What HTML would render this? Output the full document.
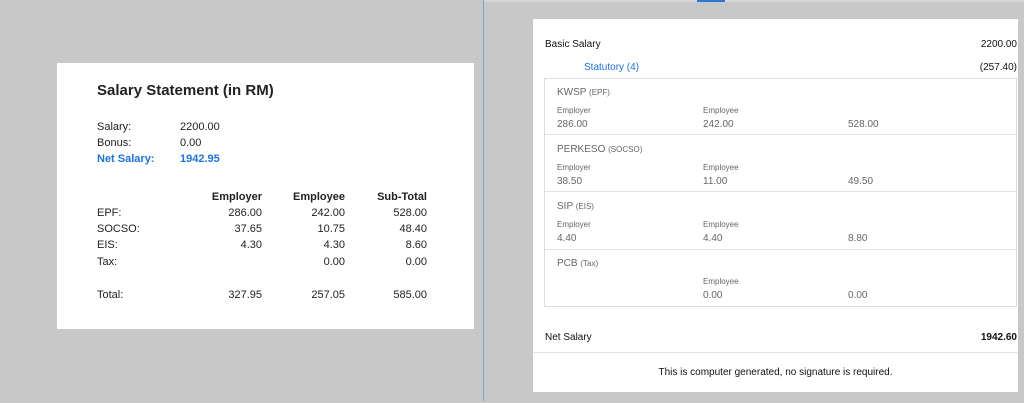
<!DOCTYPE html>
<html><head><meta charset="utf-8"><style>
*{margin:0;padding:0;box-sizing:border-box}
body{width:1024px;height:401px;background:#c8c8c8;font-family:"Liberation Sans",Arial,sans-serif;position:relative;overflow:hidden;color:#222}
.a{position:absolute;white-space:nowrap;line-height:1}
.l{font-size:11px;color:#222}
.r{text-align:right}
.g{color:#666}
.w{position:absolute;left:0;width:1024px;height:401px}
</style></head><body>
<div class="a" style="left:483px;top:0;width:1px;height:401px;background:#7aa6d6"></div>
<div class="a" style="left:484px;top:0;width:540px;height:2px;background:#d8d8d8"></div>
<div class="a" style="left:697px;top:0;width:28px;height:2px;background:#2a78d0"></div>

<div class="a" style="left:57px;top:63px;width:417px;height:266px;background:#fff"></div>
<div class="w" style="top:1px">
<div class="a" style="left:97px;top:82px;font-size:15px;font-weight:bold;color:#222">Salary Statement (in RM)</div>
<div class="a l" style="left:97px;top:121px">Salary:</div><div class="a l" style="left:180px;top:121px">2200.00</div>
<div class="a l" style="left:97px;top:137px">Bonus:</div><div class="a l" style="left:180px;top:137px">0.00</div>
<div class="a l" style="left:97px;top:153px;color:#1a73e8;font-weight:bold">Net Salary:</div><div class="a l" style="left:180px;top:153px;color:#1a73e8;font-weight:bold">1942.95</div>
<div class="a l r" style="left:162px;width:100px;top:191px;font-weight:bold">Employer</div>
<div class="a l r" style="left:245px;width:100px;top:191px;font-weight:bold">Employee</div>
<div class="a l r" style="left:327px;width:100px;top:191px;font-weight:bold">Sub-Total</div>
<div class="a l" style="left:97px;top:207px">EPF:</div><div class="a l r" style="left:162px;width:100px;top:207px">286.00</div><div class="a l r" style="left:245px;width:100px;top:207px">242.00</div><div class="a l r" style="left:327px;width:100px;top:207px">528.00</div>
<div class="a l" style="left:97px;top:223px">SOCSO:</div><div class="a l r" style="left:162px;width:100px;top:223px">37.65</div><div class="a l r" style="left:245px;width:100px;top:223px">10.75</div><div class="a l r" style="left:327px;width:100px;top:223px">48.40</div>
<div class="a l" style="left:97px;top:239px">EIS:</div><div class="a l r" style="left:162px;width:100px;top:239px">4.30</div><div class="a l r" style="left:245px;width:100px;top:239px">4.30</div><div class="a l r" style="left:327px;width:100px;top:239px">8.60</div>
<div class="a l" style="left:97px;top:256px">Tax:</div><div class="a l r" style="left:245px;width:100px;top:256px">0.00</div><div class="a l r" style="left:327px;width:100px;top:256px">0.00</div>
<div class="a l" style="left:97px;top:289px">Total:</div><div class="a l r" style="left:162px;width:100px;top:289px">327.95</div><div class="a l r" style="left:245px;width:100px;top:289px">257.05</div><div class="a l r" style="left:327px;width:100px;top:289px">585.00</div>
</div>

<div class="a" style="left:533px;top:19px;width:485px;height:373px;background:#fff"></div>
<div class="a" style="left:533px;top:352px;width:485px;height:1px;background:#e4e4e4"></div>
<div class="a" style="left:544px;top:78px;width:473px;height:229px;border:1px solid #ddd"></div>
<div class="a" style="left:545px;top:134px;width:471px;height:1px;background:#e2e2e2"></div>
<div class="a" style="left:545px;top:191px;width:471px;height:1px;background:#e2e2e2"></div>
<div class="a" style="left:545px;top:249px;width:471px;height:1px;background:#e2e2e2"></div>
<div class="w" style="top:2px">
<div class="a" style="left:545px;top:38px;font-size:10px;color:#111">Basic Salary</div>
<div class="a r" style="left:917px;width:100px;top:38px;font-size:10px;color:#111">2200.00</div>
<div class="a" style="left:584px;top:61px;font-size:10px;color:#1a73e8">Statutory (4)</div>
<div class="a r" style="left:917px;width:100px;top:61px;font-size:10px;color:#111">(257.40)</div>

<div class="a g" style="left:557px;top:86px;font-size:10px">KWSP <span style="font-size:8px">(EPF)</span></div>
<div class="a g" style="left:557px;top:105px;font-size:8px">Employer</div><div class="a g" style="left:703px;top:105px;font-size:8px">Employee</div>
<div class="a g" style="left:557px;top:118px;font-size:10px">286.00</div><div class="a g" style="left:703px;top:118px;font-size:10px">242.00</div><div class="a g" style="left:848px;top:118px;font-size:10px">528.00</div>

<div class="a g" style="left:557px;top:143px;font-size:10px">PERKESO <span style="font-size:8px">(SOCSO)</span></div>
<div class="a g" style="left:557px;top:162px;font-size:8px">Employer</div><div class="a g" style="left:703px;top:162px;font-size:8px">Employee</div>
<div class="a g" style="left:557px;top:175px;font-size:10px">38.50</div><div class="a g" style="left:703px;top:175px;font-size:10px">11.00</div><div class="a g" style="left:848px;top:175px;font-size:10px">49.50</div>

<div class="a g" style="left:557px;top:200px;font-size:10px">SIP <span style="font-size:8px">(EIS)</span></div>
<div class="a g" style="left:557px;top:219px;font-size:8px">Employer</div><div class="a g" style="left:703px;top:219px;font-size:8px">Employee</div>
<div class="a g" style="left:557px;top:232px;font-size:10px">4.40</div><div class="a g" style="left:703px;top:232px;font-size:10px">4.40</div><div class="a g" style="left:848px;top:232px;font-size:10px">8.80</div>

<div class="a g" style="left:557px;top:257px;font-size:10px">PCB <span style="font-size:8px">(Tax)</span></div>
<div class="a g" style="left:703px;top:276px;font-size:8px">Employee</div>
<div class="a g" style="left:703px;top:289px;font-size:10px">0.00</div><div class="a g" style="left:848px;top:289px;font-size:10px">0.00</div>

<div class="a" style="left:545px;top:331px;font-size:10px;color:#111">Net Salary</div>
<div class="a r" style="left:917px;width:100px;top:331px;font-size:10px;font-weight:bold;color:#111">1942.60</div>
<div class="a" style="left:533px;width:485px;top:366px;font-size:10px;color:#111;text-align:center">This is computer generated, no signature is required.</div>
</div>
</body></html>
